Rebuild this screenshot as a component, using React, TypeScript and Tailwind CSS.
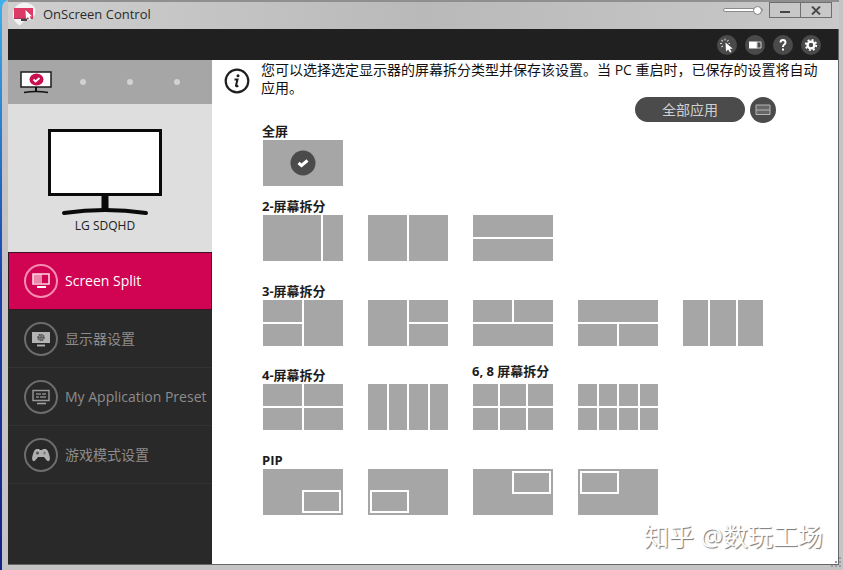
import clsx from "clsx";
import React from "react";

type Split = {
  label: string;
  grid: string;
  cells: string[];
};

const TWO_SPLITS: Split[] = [
  { label: "2 wide left", grid: "grid-cols-[58fr_20fr]", cells: ["", ""] },
  { label: "2 columns", grid: "grid-cols-2", cells: ["", ""] },
  { label: "2 rows", grid: "grid-rows-2", cells: ["", ""] },
];

const THREE_SPLITS: Split[] = [
  {
    label: "3 right tall",
    grid: "grid-cols-2 grid-rows-2",
    cells: ["", "row-span-2", ""],
  },
  {
    label: "3 left tall",
    grid: "grid-cols-2 grid-rows-2",
    cells: ["row-span-2", "", ""],
  },
  {
    label: "3 bottom wide",
    grid: "grid-cols-2 grid-rows-2",
    cells: ["", "", "col-span-2"],
  },
  {
    label: "3 top wide",
    grid: "grid-cols-2 grid-rows-2",
    cells: ["col-span-2", "", ""],
  },
  { label: "3 columns", grid: "grid-cols-3", cells: ["", "", ""] },
];

const FOUR_SPLITS: Split[] = [
  {
    label: "4 quarters",
    grid: "grid-cols-2 grid-rows-2",
    cells: ["", "", "", ""],
  },
  { label: "4 columns", grid: "grid-cols-4", cells: ["", "", "", ""] },
];

const MANY_SPLITS: Split[] = [
  {
    label: "6 cells",
    grid: "grid-cols-3 grid-rows-2",
    cells: Array(6).fill(""),
  },
  {
    label: "8 cells",
    grid: "grid-cols-4 grid-rows-2",
    cells: Array(8).fill(""),
  },
];

const PIP_POSITIONS = [
  { label: "PIP bottom right", align: "items-end justify-end" },
  { label: "PIP bottom left", align: "items-end justify-start" },
  { label: "PIP top right", align: "items-start justify-end" },
  { label: "PIP top left", align: "items-start justify-start" },
];

const SplitButton: React.FC<{ split: Split }> = ({ split }) => (
  <button
    type="button"
    aria-label={split.label}
    className={clsx("grid h-[46px] w-20 gap-[2px]", split.grid)}
  >
    {split.cells.map((cell, i) => (
      <span key={i} className={clsx("bg-[#a6a6a6]", cell)} />
    ))}
  </button>
);

const SplitSection: React.FC<{
  title: string;
  className?: string;
  raised?: boolean;
  children: React.ReactNode;
}> = ({ title, className, raised, children }) => (
  <section className={className}>
    <h2
      className={clsx(
        "h-[18px] text-[13px] font-bold text-[#1c1c1c]",
        raised ? "leading-[10px]" : "leading-[18px]",
      )}
    >
      {title}
    </h2>
    <div className="flex gap-[25px] pl-px">{children}</div>
  </section>
);

const AppLogo = () => (
  <svg viewBox="0 0 26 26" className="size-[26px]" aria-hidden="true">
    <path
      d="M24.500 8A12 12 0 1 0 9 24.500L13 20l11-6z"
      fill="#f4f2f2"
    />
    <path d="M3 7h19v11H3z" fill="#de3a68" />
    <path d="M3 17.500h19" stroke="#9c3c56" />
    <path d="M10 18h6v2h-6z" fill="#444" />
    <path d="m14.500 9 .5 9 2-2 1.500 3 1.500-.7-1.300-3H21z" fill="#fff" />
  </svg>
);

const SmallMonitor = () => (
  <svg viewBox="0 0 32 23" className="h-[23px] w-8" aria-hidden="true">
    <rect x="1" y="1" width="30" height="15" fill="#fff" stroke="#1b1b1b" strokeWidth="1.500" />
    <path d="M16 16v4" stroke="#111" strokeWidth="2" />
    <path d="M4 21.500q12-2 24 0" fill="none" stroke="#111" strokeWidth="1.500" />
    <ellipse cx="16.500" cy="8.500" rx="7" ry="6" fill="#c8104f" />
    <path d="m13.500 8.500 2 2 4-3.500" fill="none" stroke="#fff" strokeWidth="1.800" />
  </svg>
);

const Monitor = () => (
  <svg viewBox="0 0 114 88" className="h-[88px] w-[114px]" aria-hidden="true">
    <rect x="1.500" y="1.500" width="111" height="64" fill="#fff" stroke="#0a0a0a" strokeWidth="3" />
    <path d="M53.500 66h7v14h-7z" fill="#0a0a0a" />
    <path
      d="M16 84q41-6 82 0"
      fill="none"
      stroke="#0a0a0a"
      strokeWidth="4"
      strokeLinecap="round"
    />
  </svg>
);

const SplitIcon = () => (
  <svg viewBox="0 0 18 16" className="h-4 w-[18px]" aria-hidden="true">
    <path d="M1 1h9v9H1z" fill="#e988ab" />
    <path d="M1 1h16v10H1z" fill="none" stroke="#fbd5e2" strokeWidth="1.600" />
    <path d="M5 14h9" stroke="#fff" strokeWidth="2" />
  </svg>
);

const DisplayIcon = () => (
  <svg viewBox="0 0 18 16" className="h-4 w-[18px]" aria-hidden="true">
    <path d="M0 1h18v11H0z" fill="#b4b4b4" />
    <path d="M5 14.500h8" stroke="#b4b4b4" strokeWidth="1.800" />
    <circle cx="9" cy="6.500" r="3" fill="#888" stroke="#555" strokeWidth="1.500" strokeDasharray="1.500 .8" />
    <path d="M9 3v7M5.500 6.500h7" stroke="#606060" />
  </svg>
);

const PresetIcon = () => (
  <svg viewBox="0 0 18 16" className="h-4 w-[18px]" aria-hidden="true">
    <path d="M1 1.500h16v10H1z" fill="none" stroke="#999" strokeWidth="1.400" />
    <path d="M4 5h5m1 0h4M4 8h3m1 0h6" stroke="#888" strokeWidth="1.600" />
    <path d="M5 14.500h9" stroke="#a0a0a0" strokeWidth="1.600" />
  </svg>
);

const GameIcon = () => (
  <svg viewBox="0 0 18 14" className="h-3.5 w-[18px]" aria-hidden="true">
    <path
      d="M4 1h3l1 1h2l1-1h3q2 1 3 5 1.500 5 .4 6.500-1.400 1.500-3-.5L12 9H6l-2.400 3q-1.600 2-3 .5Q-.5 11 1 6q1-4 3-5z"
      fill="#b0b0b0"
    />
    <circle cx="5.500" cy="5" r="1.500" fill="#555" />
    <path d="M12.500 3.500v3M11 5h3" stroke="#777" />
  </svg>
);

const MENU = [
  { label: "Screen Split", icon: <SplitIcon />, active: true },
  { label: "显示器设置", icon: <DisplayIcon /> },
  { label: "My Application Preset", icon: <PresetIcon /> },
  { label: "游戏模式设置", icon: <GameIcon /> },
];

const TOOLS = [
  {
    label: "Pointer",
    icon: (
      <>
        <path d="m8.500 7.500.5 9 2.200-2 1.800 3 1.500-.8-1.600-3h3z" fill="#fff" />
        <path d="M8 5.500V3.500M5.800 6.300 4.500 5M5 8.500H3M6 11l-1.500 1M10.300 6.300 11.500 5M11.500 8.500H13" stroke="#d8d8d8" strokeWidth="1.100" />
      </>
    ),
  },
  {
    label: "Window layout",
    icon: (
      <>
        <path d="M4 6.500h8v7H4z" fill="#fff" />
        <path d="M12 7h4v6h-4z" fill="none" stroke="#ccc" />
      </>
    ),
  },
  {
    label: "Help",
    icon: (
      <>
        <path d="M7.500 7.500q0-2.500 2.500-2.500t2.500 2.500q0 1.400-1.500 2.200-1 .6-1 2.300" fill="none" stroke="#fff" strokeWidth="1.900" />
        <path d="M9 13.500h2v2H9z" fill="#fff" />
      </>
    ),
  },
  {
    label: "Settings",
    icon: (
      <>
        <circle cx="10" cy="10" r="3.400" fill="none" stroke="#fff" strokeWidth="2.400" />
        <circle cx="10" cy="10" r="5.200" fill="none" stroke="#fff" strokeWidth="1.800" strokeDasharray="2 2.080" />
      </>
    ),
  },
];

const TitleBar = () => (
  <header className="flex h-[29px] items-start justify-between bg-gradient-to-r from-[#cfcfcf] via-[#b9b9b9] to-[#c9c9c9] pl-[3px] pr-[7px] shadow-[inset_0_2px_0_#8f8f8f]">
    <div className="flex items-center gap-[6px] pt-px">
      <AppLogo />
      <h1 className="text-[13px] leading-[26px] text-[#2b2b2b]">OnScreen Control</h1>
    </div>
    <div className="flex items-center gap-1.5 pt-[2px]">
      <input
        type="range"
        aria-label="Opacity"
        defaultValue={100}
        className="h-1 w-10 appearance-none rounded-full border border-[#8a8a8a] bg-white [&::-webkit-slider-thumb]:size-[9px] [&::-webkit-slider-thumb]:appearance-none [&::-webkit-slider-thumb]:rounded-full [&::-webkit-slider-thumb]:border [&::-webkit-slider-thumb]:border-[#808080] [&::-webkit-slider-thumb]:bg-white"
      />
      <div className="flex border border-[#6e6e6e]">
        <button
          type="button"
          aria-label="Minimize"
          className="flex h-3.5 w-[31px] items-center justify-center border-r border-[#6e6e6e]"
        >
          <span className="mt-1 h-[2px] w-[10px] bg-[#444]" />
        </button>
        <button
          type="button"
          aria-label="Close"
          className="flex h-3.5 w-[30px] items-center justify-center"
        >
          <svg viewBox="0 0 10 9" className="h-[9px] w-[10px]">
            <path d="m1 .5 8 8m0-8-8 8" stroke="#4a4a4a" strokeWidth="2" />
          </svg>
        </button>
      </div>
    </div>
  </header>
);

const Sidebar = () => (
  <aside className="flex w-[204px] shrink-0 flex-col bg-[#292929]">
    <div className="flex h-11 items-center bg-[#a6a6a6] pl-3">
      <SmallMonitor />
      <div className="flex gap-[41px] pl-7">
        {[1, 2, 3].map((n) => (
          <span key={n} className="size-1.5 rounded-full bg-[#d2d2d2]" />
        ))}
      </div>
    </div>
    <div className="flex h-[148px] flex-col items-center bg-[#dedede] pr-2.5 pt-[25px]">
      <Monitor />
      <p className="text-xs leading-[18px] text-[#222]">LG SDQHD</p>
    </div>
    <nav>
      {MENU.map((item) => (
        <button
          key={item.label}
          type="button"
          className={clsx(
            "flex h-[58px] w-full items-center gap-[7px] whitespace-nowrap border pl-[15px] text-left text-sm",
            item.active
              ? "border-[#3a1424] bg-[#d00453] text-white"
              : "border-transparent border-b-[#333] text-[#8c8c8c]",
          )}
        >
          <span
            className={clsx(
              "flex size-[34px] shrink-0 items-center justify-center rounded-full border-2",
              item.active ? "border-[#f58db3]" : "border-[#6c6c6c]",
            )}
          >
            {item.icon}
          </span>
          {item.label}
        </button>
      ))}
    </nav>
  </aside>
);

const SplitPanel = () => (
  <main className="relative min-w-0 flex-1 bg-white pb-[46px] pl-[12px] pt-px">
    <div className="flex gap-[11px] pr-3">
      <svg viewBox="0 0 26 26" className="mt-[7px] size-[26px] shrink-0" aria-hidden="true">
        <circle cx="13" cy="13" r="11.300" fill="none" stroke="#1f1f1f" strokeWidth="2.200" />
        <circle cx="14" cy="7.700" r="1.500" fill="#1f1f1f" />
        <path d="M10.500 11.500h3L12 17.500q-.2 1.300 2.300.3" fill="none" stroke="#1f1f1f" strokeWidth="2" />
      </svg>
      <p className="text-sm leading-[18px] text-[#111]">
        您可以选择选定显示器的屏幕拆分类型并保存该设置。当 PC 重启时，已保存的设置将自动应用。
      </p>
    </div>

    <div className="flex h-[25px] justify-end gap-[5px] pr-[62px]">
      <button
        type="button"
        className="h-[25px] w-[110px] rounded-full bg-[#4b4b4b] text-sm leading-[25px] text-[#d0d0d0]"
      >
        全部应用
      </button>
      <button
        type="button"
        aria-label="Layout"
        className="flex size-[26px] items-center justify-center rounded-full bg-[#4b4b4b]"
      >
        <svg viewBox="0 0 16 12" className="h-3 w-4">
          <path d="M1 1h14v9.500H1z" fill="#666" stroke="#b5b5b5" />
          <path d="M1 6h14" stroke="#b5b5b5" />
        </svg>
      </button>
    </div>

    <div className="pl-[38px]">
      <SplitSection title="全屏">
        <button
          type="button"
          aria-label="全屏"
          className="flex h-[46px] w-20 items-center justify-center bg-[#a6a6a6]"
        >
          <svg viewBox="0 0 26 26" className="size-[26px]">
            <circle cx="13" cy="13" r="12.500" fill="#4b4b4b" />
            <path d="m8.500 13 3 2.500 6-5" fill="none" stroke="#fff" strokeWidth="3" />
          </svg>
        </button>
      </SplitSection>

      <SplitSection title="2-屏幕拆分" className="mt-[11px]">
        {TWO_SPLITS.map((s) => (
          <SplitButton key={s.label} split={s} />
        ))}
      </SplitSection>

      <SplitSection title="3-屏幕拆分" className="mt-[21px]">
        {THREE_SPLITS.map((s) => (
          <SplitButton key={s.label} split={s} />
        ))}
      </SplitSection>

      <div className="mt-5 flex gap-6">
        <SplitSection title="4-屏幕拆分">
          {FOUR_SPLITS.map((s) => (
            <SplitButton key={s.label} split={s} />
          ))}
        </SplitSection>
        <SplitSection title="6, 8 屏幕拆分" raised>
          {MANY_SPLITS.map((s) => (
            <SplitButton key={s.label} split={s} />
          ))}
        </SplitSection>
      </div>

      <SplitSection title="PIP" className="mt-[21px]">
        {PIP_POSITIONS.map((p) => (
          <button
            key={p.label}
            type="button"
            aria-label={p.label}
            className={clsx("flex h-[46px] w-20 bg-[#a6a6a6] p-[2px]", p.align)}
          >
            <span className="h-[23px] w-[39px] border-2 border-white" />
          </button>
        ))}
      </SplitSection>
    </div>

    <p className="absolute bottom-[11px] right-[15px] text-[25px] leading-[34px] text-white [text-shadow:1px_1px_1px_#777]">
      知乎 @数玩工场
    </p>
  </main>
);

const App: React.FC = () => {
  return (
    <div className="flex min-h-screen bg-gradient-to-b from-[#3fb0ec] via-[#1c3fae] to-[#14228a] pl-[2px] font-['Open_Sans','Noto_Sans_CJK_SC',sans-serif]">
      <div className="relative flex flex-1 flex-col rounded-tl-lg bg-[#c6c3c5] pb-[5px] pl-[6px] pr-1">
        <TitleBar />
        <div className="flex flex-1 flex-col border-b border-r border-[#666]">
          <div className="flex h-[31px] items-center justify-end gap-2 bg-[#202020] pr-[17px]">
            {TOOLS.map((tool) => (
              <button
                key={tool.label}
                type="button"
                aria-label={tool.label}
                className="size-5 rounded-full bg-[#4a4a4a]"
              >
                <svg viewBox="0 0 20 20" className="size-5">
                  {tool.icon}
                </svg>
              </button>
            ))}
          </div>
          <div className="flex flex-1">
            <Sidebar />
            <SplitPanel />
          </div>
        </div>
        {/* Resize grip */}
        <svg viewBox="0 0 16 16" className="absolute bottom-0 right-0 size-4" aria-hidden="true">
          <path
            d="M12 3h2v2h-2zM8 7h2v2H8zM12 7h2v2h-2zM4 11h2v2H4zM8 11h2v2H8zM12 11h2v2h-2z"
            fill="#9a9aa8"
          />
        </svg>
      </div>
    </div>
  );
};

export default App;
